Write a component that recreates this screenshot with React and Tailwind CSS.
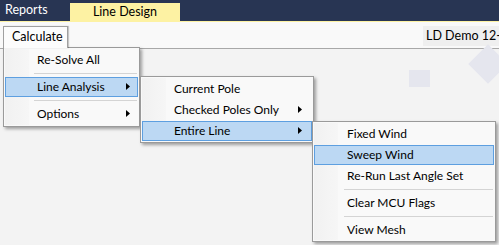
import React from "react";

const Arrow = () => (
  <svg width="4" height="7" viewBox="0 0 4 7" className="block">
    <path d="M0 0 L4 3.5 L0 7 Z" fill="#000" />
  </svg>
);

function Item({ label, arrow, active, textLeft, arrowRight }) {
  return (
    <div className="relative h-[21px] flex items-center">
      {active && (
        <div className="absolute left-[1px] right-[1px] top-[1px] bottom-0 bg-[#bcd8f3] border border-[#5d9fe0]" />
      )}
      <span className="relative whitespace-nowrap" style={{ marginLeft: textLeft }}>{label}</span>
      {arrow && (
        <span className="absolute top-[7px]" style={{ right: arrowRight }}>
          <Arrow />
        </span>
      )}
    </div>
  );
}

function Sep({ left }) {
  return (
    <div className="h-[6px] flex items-center">
      <div className="h-px bg-[#d4d4d4] flex-1 mr-[2px]" style={{ marginLeft: left }} />
    </div>
  );
}

function Menu({ className, children }) {
  return (
    <div
      className={
        "absolute border border-[#9a9a9a] bg-[#f9f9f9] py-[1px] shadow-[2px_2px_3px_rgba(0,0,0,0.35)] " +
        className
      }
    >
      <div className="absolute left-[1px] top-[1px] bottom-[1px] w-[24px] bg-gradient-to-r from-[#f1f1f1] to-[#f6f6f6]" />
      <div className="relative">{children}</div>
    </div>
  );
}

export default function App() {
  return (
    <div
      className="relative w-[499px] h-[245px] overflow-hidden bg-[#f3f3f3] text-[12px] text-black"
      style={{ fontFamily: 'Lato, "Noto Sans", sans-serif' }}
    >
      {/* top bar */}
      <div className="h-[21px] bg-[#283553] flex items-end">
        <div className="h-[21px] flex items-center pl-[5px] w-[70px] text-white text-[12.5px]">Reports</div>
        <div className="h-[18px] w-[110px] bg-[#fdf2a3] flex items-center justify-center text-[12.5px]">Line Design</div>
      </div>
      <div className="h-px bg-[#fdf2a3]" />
      {/* ribbon */}
      <div className="h-[27px] bg-[#f9f9f9] border-b border-[#a8a8a8] flex items-start justify-between pt-[4px]">
        <div className="ml-[3px] w-[65px] h-[22px] border border-b-0 border-[#a0a0a0] bg-[#fcfcfc] shadow-[1px_0_1px_rgba(0,0,0,0.2)] flex items-center pl-[8px] relative z-20 text-[12.5px]">
          Calculate
        </div>
        <div className="w-[76px] h-[20px] bg-[#efefef] flex items-center pl-[3px] whitespace-nowrap overflow-hidden text-[12.5px]">
          LD Demo 12-20
        </div>
      </div>
      {/* main canvas */}
      <div className="relative h-[195px]">
        <div className="absolute left-[409px] top-[21px] w-[21px] h-[17px] bg-[#e5e6ee]" />
        <div className="absolute left-[474px] top-[1px] w-[28px] h-[28px] bg-[#e5e6ee] rotate-45" />
      </div>

      {/* main menu */}
      <Menu className="left-[3px] top-[47px] w-[137px] h-[80px] z-10">
        <Item label="Re-Solve All" textLeft={33} />
        <Sep left={30} />
        <Item label="Line Analysis" arrow active textLeft={33} arrowRight={9} />
        <Sep left={30} />
        <Item label="Options" arrow textLeft={33} arrowRight={9} />
      </Menu>

      {/* submenu 1 */}
      <Menu className="left-[140px] top-[76px] w-[174px] h-[67px] z-20">
        <Item label="Current Pole" textLeft={33} />
        <Item label="Checked Poles Only" arrow textLeft={33} arrowRight={11} />
        <Item label="Entire Line" arrow active textLeft={33} arrowRight={11} />
      </Menu>

      {/* submenu 2 */}
      <Menu className="left-[312px] top-[121px] w-[184px] h-[121px] z-30">
        <Item label="Fixed Wind" textLeft={34} />
        <Item label="Sweep Wind" active textLeft={34} />
        <Item label="Re-Run Last Angle Set" textLeft={34} />
        <Sep left={31} />
        <Item label="Clear MCU Flags" textLeft={34} />
        <Sep left={31} />
        <Item label="View Mesh" textLeft={34} />
      </Menu>
    </div>
  );
}
